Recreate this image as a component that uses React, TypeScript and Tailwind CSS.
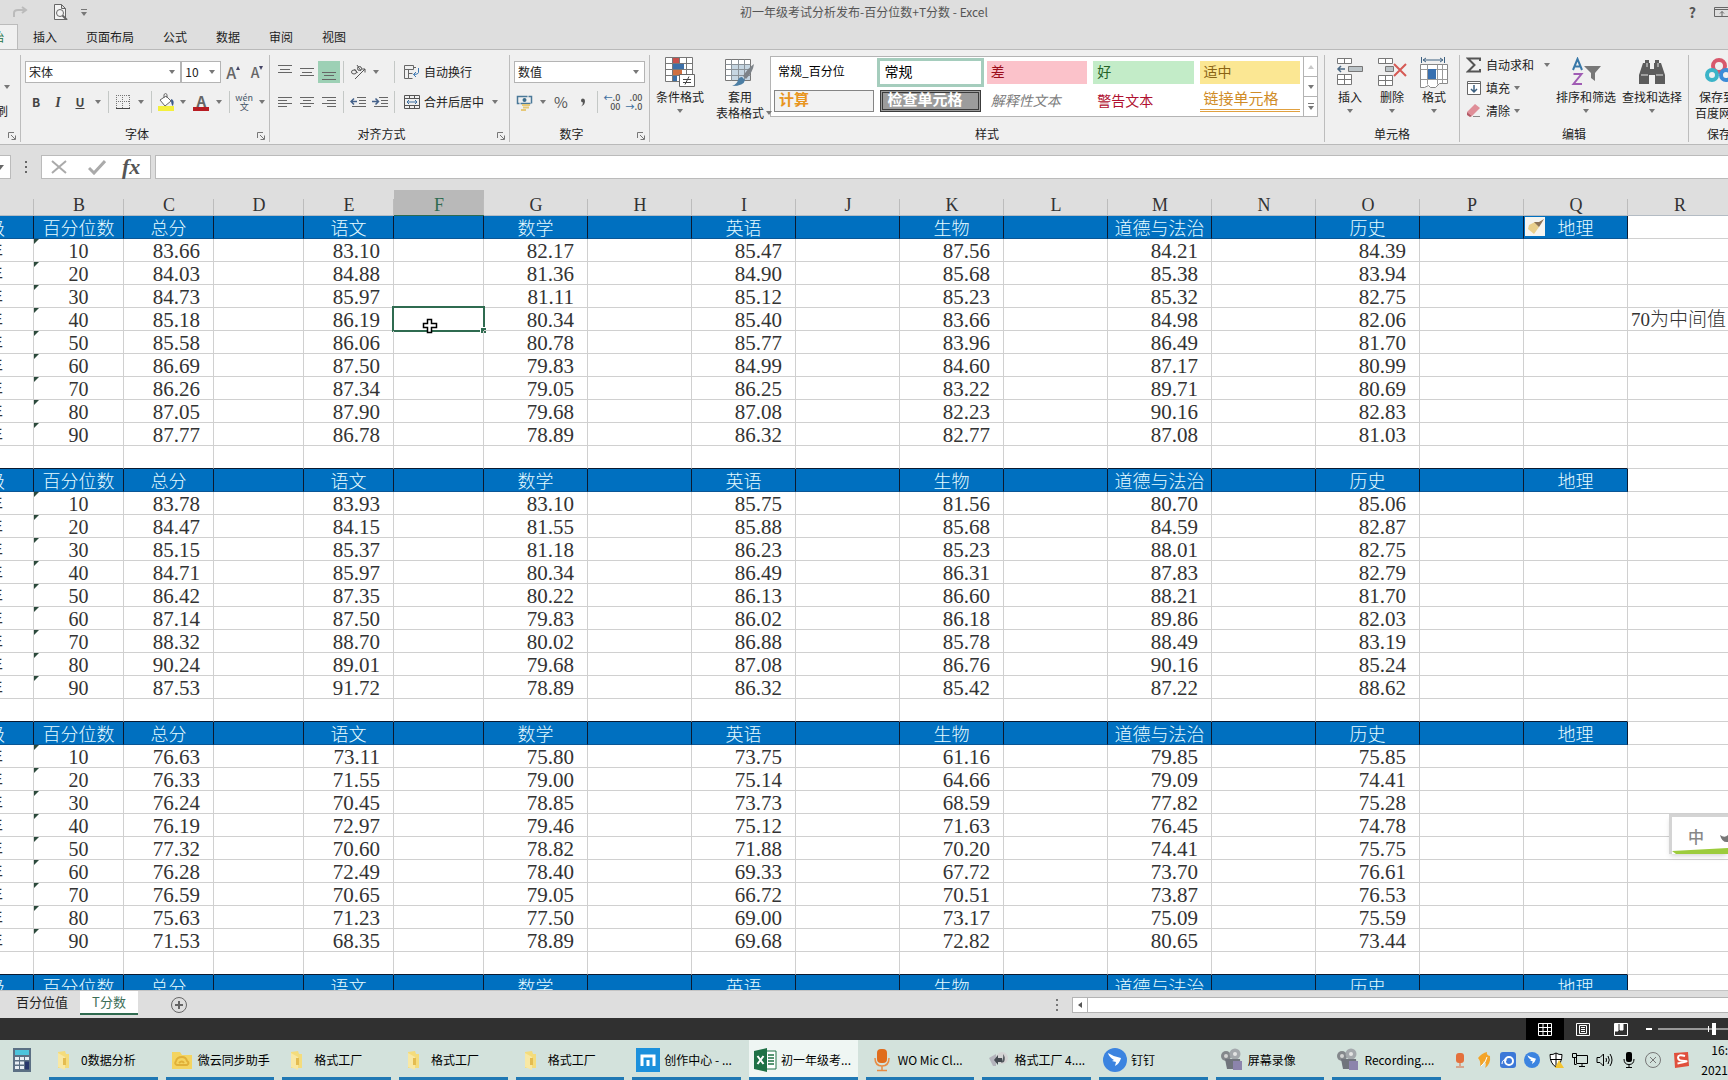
import type { ReactNode } from 'react';

const subjects: Record<string, string> = {
    A: '年级', B: '百分位数', C: '总分', D: '', E: '语文', F: '', G: '数学', H: '', I: '英语',
    J: '', K: '生物', L: '', M: '道德与法治', N: '', O: '历史', P: '', Q: '地理',
};

const columns = ['A', 'B', 'C', 'D', 'E', 'F', 'G', 'H', 'I', 'J', 'K', 'L', 'M', 'N', 'O', 'P', 'Q', 'R'];

const valueColumns = ['C', 'E', 'G', 'I', 'K', 'M', 'O'];

const blocks = [
    [
        ['83.66', '83.10', '82.17', '85.47', '87.56', '84.21', '84.39'],
        ['84.03', '84.88', '81.36', '84.90', '85.68', '85.38', '83.94'],
        ['84.73', '85.97', '81.11', '85.12', '85.23', '85.32', '82.75'],
        ['85.18', '86.19', '80.34', '85.40', '83.66', '84.98', '82.06'],
        ['85.58', '86.06', '80.78', '85.77', '83.96', '86.49', '81.70'],
        ['86.69', '87.50', '79.83', '84.99', '84.60', '87.17', '80.99'],
        ['86.26', '87.34', '79.05', '86.25', '83.22', '89.71', '80.69'],
        ['87.05', '87.90', '79.68', '87.08', '82.23', '90.16', '82.83'],
        ['87.77', '86.78', '78.89', '86.32', '82.77', '87.08', '81.03'],
    ],
    [
        ['83.78', '83.93', '83.10', '85.75', '81.56', '80.70', '85.06'],
        ['84.47', '84.15', '81.55', '85.88', '85.68', '84.59', '82.87'],
        ['85.15', '85.37', '81.18', '86.23', '85.23', '88.01', '82.75'],
        ['84.71', '85.97', '80.34', '86.49', '86.31', '87.83', '82.79'],
        ['86.42', '87.35', '80.22', '86.13', '86.60', '88.21', '81.70'],
        ['87.14', '87.50', '79.83', '86.02', '86.18', '89.86', '82.03'],
        ['88.32', '88.70', '80.02', '86.88', '85.78', '88.49', '83.19'],
        ['90.24', '89.01', '79.68', '87.08', '86.76', '90.16', '85.24'],
        ['87.53', '91.72', '78.89', '86.32', '85.42', '87.22', '88.62'],
    ],
    [
        ['76.63', '73.11', '75.80', '73.75', '61.16', '79.85', '75.85'],
        ['76.33', '71.55', '79.00', '75.14', '64.66', '79.09', '74.41'],
        ['76.24', '70.45', '78.85', '73.73', '68.59', '77.82', '75.28'],
        ['76.19', '72.97', '79.46', '75.12', '71.63', '76.45', '74.78'],
        ['77.32', '70.60', '78.82', '71.88', '70.20', '74.41', '75.75'],
        ['76.28', '72.49', '78.40', '69.33', '67.72', '73.70', '76.61'],
        ['76.59', '70.65', '79.05', '66.72', '70.51', '73.87', '76.53'],
        ['75.63', '71.23', '77.50', '69.00', '73.17', '75.09', '75.59'],
        ['71.53', '68.35', '78.89', '69.68', '72.82', '80.65', '73.44'],
    ],
];

/* ---------- small shared pieces ---------- */

const Caret = ({ className = '' }: { className?: string }) => (
    <svg viewBox="0 0 6 4" className={`h-1 w-1.5 shrink-0 fill-[#777] ${className}`}>
        <path d="M0 0h6L3 4z" />
    </svg>
);

const CaretButton = ({ label, wide }: { label: string; wide?: boolean }) => (
    <button aria-label={label} className={`flex h-[22px] items-center justify-center ${wide ? 'w-[22px]' : 'w-[14px]'}`}>
        <Caret />
    </button>
);

const IconButton = ({ label, active, children }: { label: string; active?: boolean; children: ReactNode }) => (
    <button
        aria-label={label}
        className={`flex h-[22px] w-[22px] shrink-0 items-center justify-center ${active ? 'bg-[#9dd0b5]' : ''}`}
    >
        {children}
    </button>
);

const Divider = () => <span className="flex h-[22px] w-[7px] justify-center"><span className="w-px bg-[#c4c8c6]" /></span>;

const Lines = ({ rows }: { rows: [number, number, number][] }) => (
    <svg viewBox="0 0 16 16" className="h-4 w-4 stroke-[#666]" fill="none">
        {rows.map(([x1, x2, y], i) => <path key={i} d={`M${x1} ${y}.5H${x2}`} />)}
    </svg>
);

const Launcher = ({ label }: { label: string }) => (
    <button aria-label={label} className="absolute right-1 bottom-0.5">
        <svg viewBox="0 0 8 8" className="h-2 w-2 stroke-[#777]" fill="none">
            <path d="M.5 6V.5H6M3 3l4 4M7.5 3.5v4h-4" />
        </svg>
    </button>
);

const Group = ({ label, launcher, className, children }: { label: string; launcher?: boolean; className: string; children: ReactNode }) => (
    <section aria-label={label} className={`relative mt-[5px] mb-0.5 flex shrink-0 flex-col border-r border-[#bdbdbd] ${className}`}>
        <div className="h-[71px]">{children}</div>
        <div className={`text-center leading-4 whitespace-nowrap ${launcher ? 'pr-4' : ''}`}>{label}</div>
        {launcher && <Launcher label={`${label}设置`} />}
    </section>
);

const Combo = ({ label, value, className }: { label: string; value: string; className: string }) => (
    <div className={`relative h-[22px] ${className}`}>
        <select aria-label={label} defaultValue={value} className="h-full w-full appearance-none border border-[#b4b4b4] bg-white px-[3px] leading-5 outline-none">
            <option>{value}</option>
        </select>
        <Caret className="pointer-events-none absolute top-[9px] right-1.5" />
    </div>
);

const BigButton = ({ lines, icon, className }: { lines: string[]; icon: ReactNode; className: string }) => (
    <button className={`flex shrink-0 flex-col items-center pt-0.5 leading-4 whitespace-nowrap ${className}`}>
        <span className="flex h-8 items-start">{icon}</span>
        <span>{lines[0]}</span>
        {lines[1] ? (
            <span className="relative">{lines[1]}<Caret className="absolute top-1.5 -right-2" /></span>
        ) : (
            <Caret className="mt-1" />
        )}
    </button>
);

/* ---------- ribbon ---------- */

const FontGroup = () => (
    <Group label="字体" launcher className="w-[249px]">
        <div className="flex flex-col gap-2 pt-1.5 pl-1">
            <div className="flex items-center">
                <Combo label="字体" value="宋体" className="w-[157px]" />
                <Combo label="字号" value="10" className="w-10" />
                <button aria-label="增大字号" className="flex w-6 justify-center text-[16px] leading-5 font-medium text-[#666]">
                    A<svg viewBox="0 0 4 4" className="mt-1 h-1 w-1 fill-[#446]"><path d="M0 4h4L2 0z" /></svg>
                </button>
                <button aria-label="减小字号" className="flex w-6 justify-center text-[14px] leading-5 font-medium text-[#666]">
                    A<svg viewBox="0 0 4 4" className="mt-1 h-1 w-1 fill-[#446]"><path d="M0 0h4L2 4z" /></svg>
                </button>
            </div>
            <div className="flex items-center text-[#444]">
                <IconButton label="加粗"><b>B</b></IconButton>
                <IconButton label="倾斜"><span className="font-['Liberation_Serif',serif] text-[14px] font-bold italic">I</span></IconButton>
                <IconButton label="下划线"><b className="underline">U</b></IconButton>
                <CaretButton label="下划线样式" />
                <Divider />
                <IconButton label="边框">
                    <svg viewBox="0 0 14 14" className="h-3.5 w-3.5 stroke-[#777]" fill="none" strokeDasharray="1 1">
                        <path d="M.5 0v13M6.5 0v13M13.5 0v13M0 .5h14M0 6.5h14" /><path d="M0 13.5h14" strokeDasharray="none" stroke="#444" />
                    </svg>
                </IconButton>
                <CaretButton label="边框样式" />
                <Divider />
                <IconButton label="填充颜色">
                    <svg viewBox="0 0 18 18" className="h-[18px] w-[18px]" fill="none">
                        <path d="M1 13h16v5H1z" fill="#f4f03c" />
                        <path d="M3 7l6-4 5 5-6 5-5-6zM7 5V1.500q2-2 3 0V5" fill="#fff" stroke="#666" />
                        <path d="M14 6q4 1 2 7-2-1-2-7z" fill="#3c5a8c" />
                    </svg>
                </IconButton>
                <CaretButton label="填充颜色选项" />
                <IconButton label="字体颜色">
                    <span className="flex flex-col items-center text-[15px] leading-[13px] font-semibold text-[#666]">A<span className="h-1 w-4 bg-[#b81c22]" /></span>
                </IconButton>
                <CaretButton label="字体颜色选项" />
                <Divider />
                <IconButton label="拼音">
                    <span className="flex flex-col items-center text-[9px] leading-[9px] text-[#456]"><span>wén</span><span>文</span></span>
                </IconButton>
                <CaretButton label="拼音选项" />
            </div>
        </div>
    </Group>
);

const AlignGroup = () => (
    <Group label="对齐方式" launcher className="w-60">
        <div className="flex flex-col gap-2 pt-1.5 pl-1">
            <div className="flex items-center">
                <IconButton label="顶端对齐"><Lines rows={[[1, 15, 1], [3, 13, 5], [1, 15, 8]]} /></IconButton>
                <IconButton label="垂直居中"><Lines rows={[[1, 15, 4], [3, 13, 8], [1, 15, 11]]} /></IconButton>
                <IconButton label="底端对齐" active><Lines rows={[[1, 15, 8], [3, 13, 11], [1, 15, 15]]} /></IconButton>
                <Divider />
                <IconButton label="方向">
                    <svg viewBox="0 0 18 18" className="h-[18px] w-[18px]" fill="none" stroke="#555">
                        <ellipse cx="5" cy="9" rx="2.500" ry="2" /><path d="M5.500 6l3 4M8 2l4 6" />
                        <ellipse cx="10.500" cy="5.500" rx="2" ry="2" /><path d="M6 16L16 6M16 6h-3.500M16 6v3.500" />
                    </svg>
                </IconButton>
                <CaretButton label="方向选项" />
                <span className="w-2" />
                <Divider />
                <button className="flex items-center gap-1 pl-1.5">
                    <svg viewBox="0 0 16 16" className="h-4 w-4" fill="none" stroke="#666">
                        <path d="M.5 1.500h9v4h-9zM.5 5.500v9h4v-9M4.500 9.500h4M4.500 14.500h4M9 3.500h3" />
                        <path d="M14.500 4v4.500q0 2-5 2M12 8l-2.500 2.500L12 13" stroke="#3c78b4" />
                    </svg>
                    自动换行
                </button>
            </div>
            <div className="flex items-center">
                <IconButton label="左对齐"><Lines rows={[[1, 15, 3], [1, 10, 6], [1, 15, 9], [1, 10, 12]]} /></IconButton>
                <IconButton label="居中"><Lines rows={[[1, 15, 3], [4, 12, 6], [1, 15, 9], [4, 12, 12]]} /></IconButton>
                <IconButton label="右对齐"><Lines rows={[[1, 15, 3], [6, 15, 6], [1, 15, 9], [6, 15, 12]]} /></IconButton>
                <Divider />
                <IconButton label="减少缩进量">
                    <svg viewBox="0 0 16 16" className="h-4 w-4" fill="none" stroke="#666">
                        <path d="M7 3.500h9M9 6.500h7M9 9.500h7M2 12.500h14" /><path d="M7 7.500H1M4 4.500l-3 3 3 3" stroke="#44618a" strokeWidth="1.500" />
                    </svg>
                </IconButton>
                <IconButton label="增加缩进量">
                    <svg viewBox="0 0 16 16" className="h-4 w-4" fill="none" stroke="#666">
                        <path d="M7 3.500h9M9 6.500h7M9 9.500h7M2 12.500h14" /><path d="M0 7.500h6M3.500 4.500l3 3-3 3" stroke="#44618a" strokeWidth="1.500" />
                    </svg>
                </IconButton>
                <Divider />
                <button className="flex items-center gap-1 pl-1.5">
                    <svg viewBox="0 0 16 16" className="h-4 w-4" fill="none" stroke="#555">
                        <path d="M.5 1.500h15v13H.5zM.5 4.500h15M.5 11.500h15M5.500 1.500v3M10.500 1.500v3M5.500 11.500v3M10.500 11.500v3" />
                        <path d="M3 8h10M5 6L3 8l2 2M11 6l2 2-2 2" stroke="#3c6ea0" />
                    </svg>
                    合并后居中
                </button>
                <CaretButton label="合并选项" wide />
            </div>
        </div>
    </Group>
);

const NumberGroup = () => (
    <Group label="数字" launcher className="w-[140px]">
        <div className="flex flex-col gap-2 pt-1.5 pl-1">
            <Combo label="数字格式" value="数值" className="w-[131px]" />
            <div className="flex items-center text-[#555]">
                <IconButton label="会计数字格式">
                    <svg viewBox="0 0 18 18" className="h-[18px] w-[18px]" fill="none">
                        <path d="M1.500 3.500h14v7h-14z" stroke="#4a7898" strokeWidth="1.500" strokeDasharray="10 1" />
                        <circle cx="8.500" cy="7" r="2" fill="#3c6e8c" />
                        <path d="M6 12h8M7 14.500h6M5 17h5" stroke="#e6c878" strokeWidth="2" />
                    </svg>
                </IconButton>
                <CaretButton label="会计格式选项" />
                <button aria-label="百分比样式" className="w-[22px] text-[15px] leading-[22px]">%</button>
                <IconButton label="千位分隔样式">
                    <svg viewBox="0 0 6 9" className="h-[9px] w-1.5 fill-[#555]"><path d="M1 2.500q0-2 2-2t2 2.500q0 4-4 5.500 2-2 2-4-2 0-2-2z" /></svg>
                </IconButton>
                <Divider />
                <IconButton label="增加小数位数">
                    <span className="flex flex-col items-end text-[9px] leading-[9px] font-medium"><span><span className="text-[#3c6ea0]">←</span>.0</span><span>00</span></span>
                </IconButton>
                <IconButton label="减少小数位数">
                    <span className="flex flex-col items-end text-[9px] leading-[9px] font-medium"><span>.00</span><span><span className="text-[#3c6ea0]">→</span>.0</span></span>
                </IconButton>
            </div>
        </div>
    </Group>
);

const swatches = [
    { name: '常规_百分位', style: 'text-[12px] leading-5 text-black' },
    { name: '常规', style: 'text-[14px] leading-5 text-black outline-3 outline-[#a5cdbd]' },
    { name: '差', style: 'text-[14px] leading-5 bg-[#fbc2ca] text-[#9c0e1c]' },
    { name: '好', style: 'text-[14px] leading-5 bg-[#c3ecc8] text-[#246428]' },
    { name: '适中', style: 'text-[14px] leading-5 bg-[#fbe793] text-[#8a6414]' },
    { name: '计算', style: 'text-[15px] leading-4 border border-[#858585] bg-[#f2f2f2] font-bold text-[#e8951f]' },
    { name: '检查单元格', style: 'text-[15px] leading-3 border-3 border-double border-[#3c3c3c] bg-[#9c9c9c] font-bold text-white' },
    { name: '解释性文本', style: 'text-[14px] leading-5 text-[#7c7c7c] italic' },
    { name: '警告文本', style: 'text-[14px] leading-5 text-[#b01030]' },
    { name: '链接单元格', style: 'text-[15px] leading-4 border-b-3 border-double border-[#e0a040] text-[#d08c28]' },
];

const StylesGroup = () => (
    <Group label="样式" className="w-[675px]">
        <div className="flex">
            <BigButton
                className="w-[60px]"
                lines={['条件格式']}
                icon={
                    <svg viewBox="0 0 30 30" className="h-[30px] w-[30px]" fill="none">
                        <path d="M.5 .5h27v24H.5zM7.500 .5v24M14.500 .5v24M21.500 .5v24M.5 6.500h27M.5 12.500h27M.5 18.500h27" fill="#fff" stroke="#777" />
                        <path d="M8 1h6v5H8z" fill="#c8504b" /><path d="M8 7h11v5H8z" fill="#3c70a8" />
                        <path d="M8 13h9v5H8z" fill="#d07040" /><path d="M8 19h4v5H8z" fill="#3c70a8" />
                        <path d="M14.500 17.500h15v12h-15z" fill="#fff" stroke="#666" />
                        <path d="M18 22.500h8M18 25.500h8M24 19.500l-4 8" stroke="#444" />
                    </svg>
                }
            />
            <BigButton
                className="w-[60px]"
                lines={['套用', '表格格式']}
                icon={
                    <svg viewBox="0 0 30 30" className="h-[30px] w-[30px]" fill="none">
                        <path d="M.5 2.500h25v21H.5z" fill="#fff" stroke="#777" />
                        <path d="M7 8h18v15H7z" fill="#c6d6e2" />
                        <path d="M6.500 2.500v21M13.500 2.500v21M19.500 2.500v21M.5 7.500h25M.5 12.500h25M.5 18.500h25" stroke="#8a9299" />
                        <path d="M29 7q-5 3-11 12l3 3q7-7 8-15z" fill="#7c8288" />
                        <path d="M17 20l3 3q-1 6-13 6 5-2 6-6 1-3 4-3z" fill="#4c7ea4" />
                    </svg>
                }
            />
            <div className="mt-px flex h-[61px] w-[548px] border border-[#b4b4b4] bg-white">
                <div className="grid flex-1 grid-cols-5 gap-x-1.5 gap-y-1.5 px-[3px] py-1">
                    {swatches.map((s) => (
                        <button key={s.name} className={`flex items-start px-1 text-left whitespace-nowrap ${s.style}`}>{s.name}</button>
                    ))}
                </div>
                <div className="flex w-[14px] flex-col divide-y divide-[#b4b4b4] border-l border-[#b4b4b4]">
                    {['上一行', '下一行', '其他'].map((n, i) => (
                        <button key={n} aria-label={n} className="flex flex-1 flex-col items-center justify-center gap-0.5">
                            {i === 2 && <span className="h-px w-1.5 bg-[#777]" />}
                            <Caret className={i === 0 ? 'rotate-180 opacity-40' : ''} />
                        </button>
                    ))}
                </div>
            </div>
        </div>
    </Group>
);

const CellsGroup = () => (
    <Group label="单元格" className="w-[135px]">
        <div className="flex pl-1">
            <BigButton
                className="w-[42px]"
                lines={['插入']}
                icon={
                    <svg viewBox="0 0 28 30" className="h-[30px] w-7" fill="none" stroke="#777">
                        <path d="M1.500 1.500h14v5h-14zM8.500 1.500v5M1.500 17.500h14v10h-14zM8.500 17.500v10M1.500 22.500h14" fill="#fff" />
                        <path d="M12.500 9.500h14v5h-14z" fill="#bcc4c8" />
                        <path d="M9 12H2M5 9l-3 3 3 3" stroke="#4c6a84" strokeWidth="1.500" />
                    </svg>
                }
            />
            <BigButton
                className="w-[42px]"
                lines={['删除']}
                icon={
                    <svg viewBox="0 0 30 30" className="h-[30px] w-[30px]" fill="none" stroke="#777">
                        <path d="M1.500 1.500h14v5h-14zM8.500 1.500v5M1.500 18.500h14v10h-14zM8.500 18.500v10M1.500 23.500h14" fill="#fff" />
                        <path d="M8.500 9.500h8v5h-8z" fill="#bcc4c8" />
                        <path d="M17 7l12 12M29 7L17 19" stroke="#d65a55" strokeWidth="2" />
                    </svg>
                }
            />
            <BigButton
                className="w-[42px]"
                lines={['格式']}
                icon={
                    <svg viewBox="0 0 30 32" className="h-8 w-[30px]" fill="none">
                        <path d="M1.500 7.500h27v19h-8l-4 4h-5l-2-2-4 2h-4z" fill="#fff" stroke="#888" />
                        <path d="M8.500 7.500v20M18.500 7.500v20M1.500 12.500h27M1.500 22.500h27M23.500 7.500v19" stroke="#999" />
                        <path d="M9 12h8v10H9z" fill="#3870b0" />
                        <path d="M2.500 0v6M25.500 0v6M5 3h18M7 1L4 3l3 2M21 1l3 2-3 2" stroke="#3c6080" />
                    </svg>
                }
            />
        </div>
    </Group>
);

const EditGroup = () => (
    <Group label="编辑" className="w-[229px]">
        <div className="flex">
            <div className="flex w-[93px] flex-col gap-[3px] pl-1.5">
                <button className="flex h-5 items-center gap-1">
                    <svg viewBox="0 0 16 16" className="h-4 w-4 fill-none stroke-[#555] stroke-2"><path d="M14 4V1.500H2L8.500 8 2 14.500h12V12" /></svg>
                    自动求和<Caret className="ml-1.5" />
                </button>
                <button className="flex h-5 items-center gap-1">
                    <svg viewBox="0 0 16 16" className="h-4 w-4 fill-white stroke-[#666]"><path d="M1.500 1.500h13v13h-13zM1.500 3.500h13" /><path d="M8 5v7M5 9l3 3 3-3" fill="none" stroke="#3c6080" strokeWidth="1.500" /></svg>
                    填充<Caret />
                </button>
                <button className="flex h-5 items-center gap-1">
                    <svg viewBox="0 0 16 16" className="h-4 w-4"><path d="M9 1l5 4-8 8-5-4z" fill="#df8e98" /><path d="M1 9l5 4-2 1-3-2z" fill="#b45864" /><path d="M7 13.500h7" stroke="#888" /></svg>
                    清除<Caret />
                </button>
            </div>
            <BigButton
                className="w-[66px]"
                lines={['排序和筛选']}
                icon={
                    <svg viewBox="0 0 30 30" className="h-[30px] w-[30px]" fill="none">
                        <path d="M2 13L6.500 2 11 13M3.500 9.500h6" stroke="#3878a8" strokeWidth="2" />
                        <path d="M2.500 17h8l-8 10h8.500" stroke="#a05cb4" strokeWidth="2" />
                        <path d="M13 9h17l-6 7v8l-4-3v-5z" fill="#777" />
                    </svg>
                }
            />
            <BigButton
                className="w-[66px]"
                lines={['查找和选择']}
                icon={
                    <svg viewBox="0 0 28 30" className="h-[30px] w-7 fill-[#5c5c5c]">
                        <path d="M5 6h2V3h4v3h1v6h4V6h1V3h4v3h2l4 12v9H17v-9h-6v9H1v-9z" />
                        <path d="M3 18h7M18 18h7M9 6v4M20 6v4" stroke="#e4e4e4" />
                    </svg>
                }
            />
        </div>
    </Group>
);

const Ribbon = () => (
    <div className="flex h-24 shrink-0 overflow-hidden border-y border-[#b9b9b9] bg-[#f0f0f0]">
        <section aria-label="剪贴板" className="relative mt-[5px] mb-0.5 flex w-[21px] shrink-0 flex-col border-r border-[#bdbdbd]">
            <button aria-label="复制" className="mt-7 ml-1 flex h-2 w-2 items-center"><Caret /></button>
            <button className="mt-2.5 flex h-5 w-2 items-center justify-end overflow-hidden">刷</button>
            <Launcher label="剪贴板设置" />
        </section>
        <FontGroup />
        <AlignGroup />
        <NumberGroup />
        <StylesGroup />
        <CellsGroup />
        <EditGroup />
        <section aria-label="保存" className="mt-[5px] flex min-w-0 flex-1 flex-col overflow-hidden pl-1.5 leading-4 whitespace-nowrap">
            <button className="flex h-[71px] flex-col pt-0.5 text-left">
                <svg viewBox="0 0 36 32" className="ml-2.5 h-8 w-9 shrink-0" fill="none" strokeWidth="4">
                    <circle cx="14" cy="9" r="6" stroke="#d8586c" />
                    <circle cx="7" cy="18" r="5" stroke="#3cb4c8" />
                    <circle cx="21" cy="18" r="5" stroke="#3c8cd8" />
                </svg>
                <span className="pl-1">保存到</span>
                <span>百度网</span>
            </button>
            <span className="pl-3">保存</span>
        </section>
    </div>
);

const TitleBar = () => (
    <header className="flex h-6 shrink-0 items-center text-[#555]">
        <div className="flex flex-1 items-center">
            <button aria-label="恢复" className="ml-3">
                <svg viewBox="0 0 16 12" className="h-3 w-4 fill-none stroke-[#bbb] stroke-2"><path d="M2 11V7q0-3 4-3h7M10 1l4 3-4 3" /></svg>
            </button>
            <button aria-label="打印预览" className="ml-6">
                <svg viewBox="0 0 16 16" className="h-4 w-4 fill-[#f4f4f4] stroke-[#666]"><path d="M2.500 15.500V.5h7l4 4v11zM9.500 .5v4h4" /><circle cx="8" cy="9" r="3.500" /><path d="M10.500 11.500L15 16" strokeWidth="2" /></svg>
            </button>
            <button aria-label="自定义快速访问工具栏" className="ml-3 flex w-2 flex-col items-center gap-0.5"><span className="h-px w-1.5 bg-[#777]" /><Caret /></button>
        </div>
        <h1 className="leading-5">初一年级考试分析发布-百分位数+T分数 - Excel</h1>
        <div className="flex flex-1 items-center justify-end">
            <button aria-label="帮助" className="mr-[18px] text-[14px] font-bold">?</button>
            <button aria-label="功能区显示选项">
                <svg viewBox="0 0 14 12" className="h-3 w-3.5 fill-none stroke-[#666]"><path d="M14 1.500H.5v9H14M.5 3.500H14M8 10V5.500M6 7.500l2-2 2 2" /></svg>
            </button>
        </div>
    </header>
);

const FormulaBar = () => (
    <div className="flex h-[45px] shrink-0 items-start pt-2.5">
        <button aria-label="名称框" className="flex h-6 w-[11px] items-center border border-l-0 border-[#bbb] bg-white">
            <svg viewBox="0 0 4 5" className="h-[5px] w-1 fill-[#666]"><path d="M0 0h4L0 5z" /></svg>
        </button>
        <span className="flex h-6 w-[30px] flex-col items-center justify-center gap-[3px]">
            <i className="h-0.5 w-0.5 bg-[#666]" /><i className="h-0.5 w-0.5 bg-[#666]" /><i className="h-0.5 w-0.5 bg-[#666]" />
        </span>
        <div className="flex h-6 w-[110px] items-center border border-[#bbb] bg-white">
            <button aria-label="取消" className="ml-2"><svg viewBox="0 0 18 16" className="h-4 w-[18px] fill-none stroke-[#aaa] stroke-2"><path d="M2 2l14 12M16 2L2 14" /></svg></button>
            <button aria-label="输入" className="ml-5"><svg viewBox="0 0 18 16" className="h-4 w-[18px] fill-none stroke-[#aaa] stroke-3"><path d="M1 9l5 5L17 2" /></svg></button>
            <button aria-label="插入函数" className="ml-4 font-['Liberation_Serif',serif] text-[22px] leading-5 font-bold text-[#555] italic">fx</button>
        </div>
        <input aria-label="编辑栏" className="ml-1 h-6 min-w-0 flex-1 border border-r-0 border-[#bbb] bg-white px-1 outline-none" />
    </div>
);

/* ---------- sheet ---------- */

const SubjectRow = ({ first }: { first?: boolean }) => (
    <tr className="h-[23px]">
        {columns.slice(0, -1).map((col) => (
            <td key={col} className="relative overflow-hidden border-r border-b border-r-[#0b1a30] border-b-[#0a5796] bg-[#0070c0] text-center text-[18px] leading-[22px] font-light whitespace-nowrap text-[#e6fbff]">
                {col === 'A' ? <div className="flex h-[22px] justify-end pr-7">{subjects.A}</div> : subjects[col]}
                {first && col === 'Q' && (
                    <button aria-label="粘贴选项" className="absolute top-px left-px bg-[#f4f4f0]">
                        <svg viewBox="0 0 20 19" className="h-[19px] w-5"><path d="M4 8l6-3 4 5-5 7-6-5z" fill="#e8cf8c" /><path d="M9 5l5 5 2-3 3-5-5 3z" fill="#8c7458" /></svg>
                    </button>
                )}
            </td>
        ))}
        <td className="border-r border-b border-[#d0d0d0]" />
    </tr>
);

const cell = 'relative h-[23px] border-r border-b border-r-[#d0d0d0] border-b-[#d0d0d0]';
const digits = "pt-[3px] font-['Liberation_Serif',serif] leading-[19px]";

const ScoreRow = ({ percentile, values, selected, note }: { percentile: number; values: string[]; selected?: boolean; note?: string }) => (
    <tr className="h-[23px]">
        {columns.map((col) => {
            if (col === 'A') {
                return (
                    <td key={col} className={`${cell} overflow-hidden text-[18px] leading-[22px]`}>
                        <div className="flex h-[22px] justify-end pr-[30px]">年</div>
                    </td>
                );
            }
            if (col === 'B') {
                return (
                    <td key={col} className={`${cell} ${digits} text-center text-[20px]`}>
                        <svg viewBox="0 0 5 5" className="absolute top-0 left-0 h-[5px] w-[5px] fill-[#2c4a3c]"><path d="M0 0h5L0 5z" /></svg>
                        {percentile}
                    </td>
                );
            }
            const value = values[valueColumns.indexOf(col)];
            return (
                <td key={col} className={`${cell} ${digits} pr-[13px] text-right text-[21px]`}>
                    {value}
                    {col === 'F' && selected && (
                        <div className="absolute -inset-0.5 border-2 border-[#2f6b50]">
                            <span className="absolute -right-[3px] -bottom-[3px] h-[5px] w-[5px] bg-[#2f6b50] outline outline-white" />
                            <svg viewBox="0 0 16 16" className="absolute top-2.5 left-7 h-4 w-4 fill-white stroke-black"><path strokeWidth="1.500" d="M5.500 1.500h4v4h5v4h-5v5h-4v-5h-4v-4h4z" /></svg>
                        </div>
                    )}
                    {col === 'R' && note && (
                        <span className="absolute top-px left-[3px] font-['Liberation_Serif','Noto_Sans_CJK_SC',serif] text-[19px] leading-[22px] font-light whitespace-nowrap">{note}</span>
                    )}
                </td>
            );
        })}
    </tr>
);

const BlankRow = () => (
    <tr className="h-[23px]">
        {columns.map((col) => (
            <td key={col} className={`border-r border-b border-r-[#d0d0d0] ${col === 'R' ? 'border-b-[#d0d0d0]' : 'border-b-[#0b1a30]'}`} />
        ))}
    </tr>
);

const Sheet = () => (
    <main className="min-h-0 flex-1 overflow-hidden bg-white">
        <table className="w-[1732px] table-fixed border-separate border-spacing-0 text-[#333]">
            <colgroup>
                {columns.map((col, i) => (
                    <col key={col} className={i === 0 ? 'w-[34px]' : i < 6 ? 'w-[90px]' : 'w-[104px]'} />
                ))}
            </colgroup>
            <thead>
                <tr className="h-[26px]">
                    {columns.map((col) => (
                        <th
                            key={col}
                            className={`relative border-b pt-1 font-['Liberation_Serif',serif] text-[18px] leading-5 font-normal ${
                                col === 'F' ? 'border-[#2f6b50] bg-[#b9b9b9] text-[#2f6b50]' : 'border-[#b4bcc4] bg-[#dedede]'
                            }`}
                        >
                            {col !== 'A' && col}
                            <span className="absolute right-0 bottom-0 h-4 w-px bg-[#bcbcbc]" />
                        </th>
                    ))}
                </tr>
            </thead>
            {blocks.map((rows, b) => (
                <tbody key={b}>
                    <SubjectRow first={b === 0} />
                    {rows.map((values, i) => (
                        <ScoreRow
                            key={i}
                            percentile={(i + 1) * 10}
                            values={values}
                            selected={b === 0 && i === 3}
                            note={b === 0 && i === 3 ? '70为中间值' : undefined}
                        />
                    ))}
                    <BlankRow />
                </tbody>
            ))}
            <tbody><SubjectRow /></tbody>
        </table>
    </main>
);

const SheetTabs = () => (
    <nav className="flex h-7 shrink-0 items-start border-t border-[#c4c4c4] text-[13px]">
        <button className="flex h-6 w-20 items-start pl-4 leading-[22px]">百分位值</button>
        <button className="h-6 w-[58px] border-b-2 border-[#2f6b50] bg-white leading-[22px] text-[#3c6e58]">T分数</button>
        <button aria-label="新工作表" className="mt-1.5 ml-[33px]">
            <svg viewBox="0 0 16 16" className="h-4 w-4 fill-none stroke-[#666]"><circle cx="8" cy="8" r="7.500" /><path d="M4 8h8M8 4v8" strokeWidth="2" /></svg>
        </button>
        <div className="flex-1" />
        <div className="mt-1.5 flex h-4 w-[672px]">
            <span className="flex w-4 flex-col justify-center gap-[3px]"><i className="h-0.5 w-0.5 bg-[#777]" /><i className="h-0.5 w-0.5 bg-[#777]" /><i className="h-0.5 w-0.5 bg-[#777]" /></span>
            <button aria-label="向左滚动" className="flex w-4 items-center justify-center border border-[#b4b4b4] bg-white">
                <svg viewBox="0 0 4 6" className="h-1.5 w-1 fill-[#555]"><path d="M4 0v6L0 3z" /></svg>
            </button>
            <div className="flex-1 border-y border-[#b4b4b4] bg-white" />
        </div>
    </nav>
);

const StatusBar = () => (
    <div className="flex h-[22px] shrink-0 items-center justify-end bg-[#303030]">
        <button aria-label="普通" className="flex h-full w-[38px] items-center justify-center bg-black">
            <svg viewBox="0 0 14 13" className="h-[13px] w-3.5 fill-none stroke-white"><path d="M.5 .5h13v12H.5zM5 .5v12M9.500 .5v12M.5 4.500h13M.5 8.500h13" /></svg>
        </button>
        <button aria-label="页面布局" className="flex w-[38px] items-center justify-center">
            <svg viewBox="0 0 14 13" className="h-[13px] w-3.5 fill-none stroke-white"><path d="M.5 .5h13v12H.5zM3.500 2.500h7v8h-7zM5 4.500h4M5 6.500h4M5 8.500h4" /></svg>
        </button>
        <button aria-label="分页预览" className="flex w-[38px] items-center justify-center">
            <svg viewBox="0 0 14 13" className="h-[13px] w-3.5 fill-none stroke-white"><path d="M.5 .5h13v12H.5z" /><path d="M1 1h3v7H1zM6 1h3v6H6z" fill="#fff" /></svg>
        </button>
        <button aria-label="缩小" className="mx-1.5 h-0.5 w-1.5 bg-white" />
        <svg viewBox="0 0 70 12" className="h-3 w-[70px] fill-white"><path d="M0 5.500h70v1H0zM50 3h1v6h-1zM54 0h4v12h-4z" /></svg>
    </div>
);

/* ---------- taskbar ---------- */

const Folder = () => (
    <svg viewBox="0 0 24 24" className="h-6 w-6"><path d="M5 4l7-1 1 3h3v14H5z" fill="#f4dc7c" /><path d="M5 5l7 4v13l-7-3z" fill="#f8e8a4" /><path d="M10 10h3v7h-3z" fill="#e4bc50" /></svg>
);

const Camera = () => (
    <svg viewBox="0 0 24 24" className="h-6 w-6">
        <circle cx="6" cy="8" r="5" fill="#84888c" /><circle cx="15" cy="6" r="5.500" fill="#a4a8ac" /><circle cx="15" cy="6" r="2" fill="#e4e4e4" /><circle cx="6" cy="8" r="2" fill="#d4d4d4" />
        <path d="M5 11h15l1 10H7z" fill="#70747c" /><path d="M13 13h9v9h-9z" fill="#8c84ac" />
    </svg>
);

const Bird = ({ className }: { className: string }) => (
    <svg viewBox="0 0 24 24" className={className}><circle cx="12" cy="12" r="12" fill="#3c84e0" /><path d="M5 5q6 4 13 5-1 5-6 8l1-4-4-1 2-1q-5-3-6-7z" fill="#fff" /></svg>
);

const tasks = [
    { label: '0数据分析', icon: <Folder /> },
    { label: '微云同步助手', icon: <svg viewBox="0 0 24 24" className="h-6 w-6"><path d="M2 4h8l2 3h10v14H2z" fill="#f4d460" /><path d="M7 17q-3-1-1-4 1-4 6-4 4 0 5 4 3 2 0 4zM9 15q3-3 5 0" fill="none" stroke="#e0b038" strokeWidth="2" /></svg> },
    { label: '格式工厂', icon: <Folder /> },
    { label: '格式工厂', icon: <Folder /> },
    { label: '格式工厂', icon: <Folder /> },
    { label: '创作中心 - ...', icon: <svg viewBox="0 0 24 24" className="h-6 w-6"><path d="M0 0h24v24H0z" fill="#1c90dc" /><path d="M6 18V8h12v10M12 12v6" fill="none" stroke="#fff" strokeWidth="3" /></svg> },
    { label: '初一年级考...', active: true, icon: <svg viewBox="0 0 24 24" className="h-6 w-6"><path d="M13 3h10v18H13z" fill="#fff" stroke="#217346" /><path d="M15 7h6M15 10h6M15 13h6M15 16h6" stroke="#217346" strokeWidth="1.500" /><path d="M1 3l13-3v24L1 21z" fill="#1e7145" /><path d="M4.500 8l6 8M10.500 8l-6 8" stroke="#fff" strokeWidth="2" /></svg> },
    { label: 'WO Mic Cl...', icon: <svg viewBox="0 0 24 24" className="h-6 w-6"><rect x="7" y="1" width="10" height="14" rx="4" fill="#e06c1c" /><path d="M5 10q0 8 7 8t7-8M12 18v4M7 22.500h10" fill="none" stroke="#e88c44" strokeWidth="1.500" /></svg> },
    { label: '格式工厂 4....', icon: <svg viewBox="0 0 24 24" className="h-6 w-6"><path d="M3 10l7-4v12H7z" fill="#b4b4bc" /><circle cx="16" cy="10" r="6" fill="#d4d4d4" /><path d="M8 12l4-5v3h4v4h-4v3z" fill="#444a50" /><path d="M17 6q3 3 1 8l-3 1q3-5 2-9z" fill="#555b60" /></svg> },
    { label: '钉钉', icon: <Bird className="h-6 w-6" /> },
    { label: '屏幕录像', icon: <Camera /> },
    { label: 'Recording....', icon: <Camera /> },
];

const Taskbar = () => (
    <footer className="flex h-10 shrink-0 overflow-hidden bg-[#d3e2dc] text-black">
        <button aria-label="计算器" className="ml-3 flex w-[37px] items-center">
            <svg viewBox="0 0 20 24" className="h-6 w-5"><path d="M1 0h18v24H1z" fill="#5c7084" /><path d="M3 2h14v5H3z" fill="#4cc4dc" /><path d="M3 9h4v3H3zM8 9h4v3H8zM13 9h4v3h-4zM3 13.500h4v3H3zM8 13.500h4v3H8zM3 18h4v3H3zM8 18h4v3H8z" fill="#e8eef4" /><path d="M13 13.500h4v8h-4z" fill="#28386c" /></svg>
        </button>
        <div className="flex w-[1392px] shrink-0 gap-2">
            {tasks.map((t, i) => (
                <button key={i} className={`flex min-w-0 flex-1 items-center gap-1 border-b-3 border-[#2078b4] px-1 pt-[3px] whitespace-nowrap ${t.active ? 'bg-[#eff6f3]' : ''}`}>
                    <span className="shrink-0">{t.icon}</span>
                    {t.label}
                </button>
            ))}
        </div>
        <div className="flex flex-1 items-center justify-end gap-2">
            <svg viewBox="0 0 16 16" className="h-4 w-4"><rect x="4" y="1" width="8" height="10" rx="3" fill="#e4703c" /><path d="M8 11v3M4 15h8" stroke="#d89070" strokeWidth="1.500" /></svg>
            <svg viewBox="0 0 16 16" className="h-4 w-4"><path d="M2 6q4-5 9-6-1 3 3 4 1 8-5 12 2-5-1-7-1 4-4 5 1-5-2-8z" fill="#f4a428" /><path d="M5 14q5-3 6-9" stroke="#fff" fill="none" /></svg>
            <svg viewBox="0 0 16 16" className="h-4 w-4"><rect width="16" height="16" rx="3" fill="#3c78d8" /><circle cx="9" cy="9" r="4" fill="none" stroke="#fff" strokeWidth="2" /><path d="M2 12q0-5 5-4" stroke="#fff" fill="none" /></svg>
            <Bird className="h-4 w-4" />
            <svg viewBox="0 0 16 16" className="h-4 w-4 fill-white stroke-black"><path d="M8 1q3 2 6 1.500 0 9-6 12.500Q2 11.500 2 2.500 5 3 8 1zM8 1v14M2 7.500h12" /><path d="M11 8l5 8H7z" fill="#f4c430" stroke="none" /></svg>
            <svg viewBox="0 0 16 16" className="h-4 w-4 fill-none stroke-black"><path d="M4.500 3.500h11v8h-11zM10 11.500v3M7 14.500h6M.5 1.500h4v4h-4zM2.500 5.500v7h2" /></svg>
            <svg viewBox="0 0 17 16" className="h-4 w-[17px] fill-none stroke-black"><path d="M1 5.500h3L7.500 2v12L4 10.500H1zM10 6q1 2 0 4M12 4q2.500 4 0 8M14 2q4 6 0 12" /></svg>
            <svg viewBox="0 0 16 16" className="h-4 w-4"><rect x="5" y="0" width="6" height="10" rx="2" /><path d="M3 7q0 5.500 5 5.500T13 7M8 12v3M5 15.500h6" fill="none" stroke="#000" /></svg>
            <svg viewBox="0 0 16 16" className="h-4 w-4 fill-none stroke-[#777]"><circle cx="8" cy="8" r="7.500" /><path d="M5 5l6 6M11 5l-6 6" /></svg>
            <svg viewBox="0 0 16 16" className="ml-1 h-4 w-4"><path d="M1 1l14-1 1 14-14 2z" fill="#e0503c" /><path d="M12 4q-7-2-7 1.500T11.500 9t-7 2.500" stroke="#fff" strokeWidth="2" fill="none" /></svg>
            <time className="ml-1 flex flex-col items-end leading-5"><span>16:</span><span>2021</span></time>
        </div>
    </footer>
);

export default function App() {
    return (
        <div className="relative flex h-screen flex-col overflow-hidden bg-[#dedede] font-['Noto_Sans_CJK_SC',sans-serif] text-[12px] text-[#222]">
            <TitleBar />
            <nav className="flex h-[25px] shrink-0">
                <button className="flex w-[18px] items-center justify-end overflow-hidden border-t border-r border-[#bbb] bg-[#f0f0f0] pr-[13px] text-[#217346]">始</button>
                <div className="ml-[15px] flex items-center gap-[29px]">
                    {['插入', '页面布局', '公式', '数据', '审阅', '视图'].map((tab) => <button key={tab}>{tab}</button>)}
                </div>
            </nav>
            <Ribbon />
            <FormulaBar />
            <Sheet />
            <SheetTabs />
            <StatusBar />
            <Taskbar />
            {/* floating input-method bar */}
            <div className="absolute right-0 bottom-[226px] flex h-10 w-[59px] items-center gap-4 overflow-hidden border-3 border-r-0 border-b-0 border-[#d4d4d4] bg-white pl-4 shadow-md">
                <span className="text-[16px] leading-5 font-medium text-[#888]">中</span>
                <svg viewBox="0 0 16 16" className="h-4 w-4 shrink-0 fill-[#777]"><path d="M0 7q7 5 11-5 4 9-3 12-6 1-8-7z" /></svg>
                <svg viewBox="0 0 56 6" className="absolute bottom-0 left-0 h-1.5 w-14"><path d="M0 3L56 0v6H4z" fill="#9ccc3c" /></svg>
            </div>
        </div>
    );
}
